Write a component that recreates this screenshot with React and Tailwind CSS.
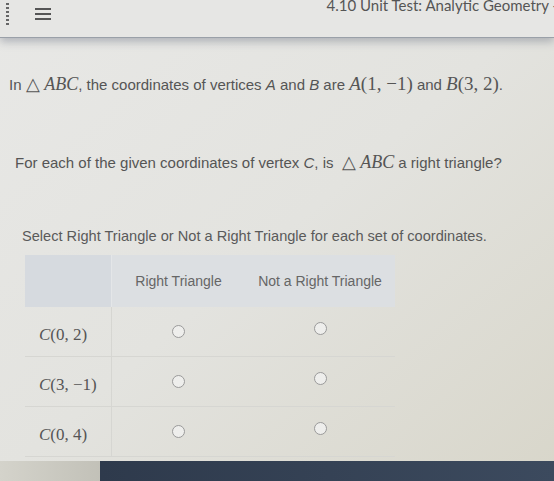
import React from 'react';

const Radio = () => (
  <span className="inline-block w-[13px] h-[13px] rounded-full border border-[#9a9a9a] bg-[#eeeeec]" />
);

const rows = [
  { v: 'C', a: '0', b: '2' },
  { v: 'C', a: '3', b: '−1' },
  { v: 'C', a: '0', b: '4' },
];

const Coord = ({ v, a, b }) => (
  <span className="font-['Liberation_Serif',serif] text-[17px] text-[#555]">
    <span className="italic">{v}</span>({a}, {b})
  </span>
);

export default function App() {
  return (
    <div className="w-[554px] h-[481px] overflow-hidden flex flex-col bg-gradient-to-br from-[#e8e8e6] via-[#e3e3df] to-[#d8d6ca] font-['Liberation_Sans',Arial,sans-serif]">
      {/* top bar */}
      <div className="h-[38px] shrink-0 flex items-start bg-[#e6e6e4] border-b border-[#9aa0a8] shadow-[0_4px_8px_rgba(80,90,110,0.35)]">
        <div className="ml-[6px] mt-[3px] flex flex-col gap-[2px]">
          {[0, 1, 2, 3, 4, 5].map(i => (
            <span key={i} className="w-[3px] h-[2px] bg-[#666]" />
          ))}
        </div>
        <div className="ml-[26px] mt-[8px] flex flex-col gap-[3px]">
          <span className="w-[16px] h-[2px] bg-[#555]" />
          <span className="w-[16px] h-[2px] bg-[#555]" />
          <span className="w-[16px] h-[2px] bg-[#555]" />
        </div>
        <div className="ml-auto -mt-[5px] text-[15px] leading-[20px] text-[#555] font-['Lato',sans-serif] whitespace-nowrap -mr-[4px]">
          4.10 Unit Test: Analytic Geometry -
        </div>
      </div>

      {/* content */}
      <div className="flex flex-col text-[15px] text-[#555]">
        <p className="mt-[32px] ml-[9px] whitespace-nowrap">
          In <span className="font-['Liberation_Serif',serif] text-[18px]">△ <i>ABC</i></span>, the coordinates of vertices <i>A</i> and <i>B</i> are{' '}
          <span className="font-['Liberation_Serif',serif] text-[19px]"><i>A</i>(1, −1)</span> and{' '}
          <span className="font-['Liberation_Serif',serif] text-[19px]"><i>B</i>(3, 2)</span>.
        </p>
        <p className="mt-[50px] ml-[15px] whitespace-nowrap">
          For each of the given coordinates of vertex <i>C</i>, is{' '}
          <span className="font-['Liberation_Serif',serif] text-[18px] ml-[4px]">△ <i>ABC</i></span> a right triangle?
        </p>
        <p className="mt-[50px] ml-[22px] whitespace-nowrap text-[14.6px] text-[#5a5a5a]">
          Select Right Triangle or Not a Right Triangle for each set of coordinates.
        </p>

        <div className="ml-[25px] mt-[8px] w-[370px] grid grid-cols-[87px_133px_150px]">
          <div className="h-[52px] bg-[#d6dadf] border-r border-[#e4e6e8]" />
          <div className="h-[52px] bg-[#dcdfe2] flex items-center justify-center text-[14px] text-[#666]">
            Right Triangle
          </div>
          <div className="h-[52px] bg-[#dcdfe2] flex items-center justify-center text-[14px] text-[#666]">
            Not a Right Triangle
          </div>
          {rows.map((r, i) => (
            <React.Fragment key={i}>
              <div className="h-[50px] flex items-center pl-[14px] pt-[6px] border-r border-b border-[#d6d6d2]">
                <Coord {...r} />
              </div>
              <div className="h-[50px] flex items-center justify-center border-b border-[#d6d6d2]">
                <Radio />
              </div>
              <div className="h-[50px] flex items-center justify-center pb-[6px] border-b border-[#d6d6d2]">
                <Radio />
              </div>
            </React.Fragment>
          ))}
        </div>
      </div>

      <div className="mt-auto h-[20px] flex">
        <div className="w-[100px] bg-gradient-to-r from-[#d4d3cb] to-[#c2c1b8]" />
        <div className="flex-1 bg-gradient-to-r from-[#2e3a4c] to-[#3c4a5e]" />
      </div>
    </div>
  );
}
